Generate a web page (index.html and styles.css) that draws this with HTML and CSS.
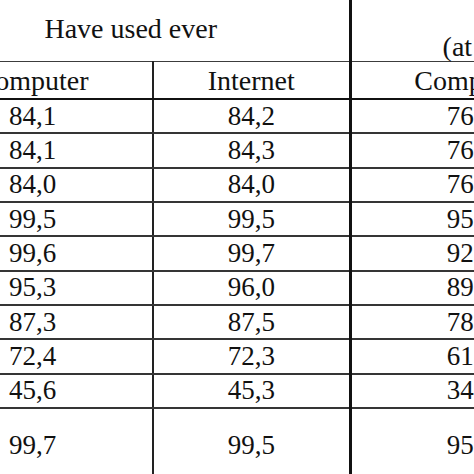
FILE: index.html
```html
<!DOCTYPE html>
<html>
<head>
<meta charset="utf-8">
<link rel="stylesheet" href="styles.css">
</head>
<body>
<div class="frame">
<table class="stats">
  <colgroup>
    <col class="c1"><col class="c2"><col class="c3"><col class="c4">
  </colgroup>
  <tr class="head1">
    <th colspan="2" class="grp grp-left">Have used ever</th>
    <th colspan="2" class="grp grp-right">Use regularly<br>(at least once every week)</th>
  </tr>
  <tr class="head2">
    <th class="k1">Computer</th><th class="k2">Internet</th><th class="k3">Computer</th><th class="k4">Internet</th>
  </tr>
  <tr class="row"><td class="k1">84,1</td><td class="k2">84,2</td><td class="k3">76,4</td><td class="k4">76,6</td></tr>
  <tr class="row"><td class="k1">84,1</td><td class="k2">84,3</td><td class="k3">76,5</td><td class="k4">76,7</td></tr>
  <tr class="row"><td class="k1">84,0</td><td class="k2">84,0</td><td class="k3">76,2</td><td class="k4">76,4</td></tr>
  <tr class="row"><td class="k1">99,5</td><td class="k2">99,5</td><td class="k3">95,1</td><td class="k4">95,4</td></tr>
  <tr class="row"><td class="k1">99,6</td><td class="k2">99,7</td><td class="k3">92,8</td><td class="k4">93,0</td></tr>
  <tr class="row"><td class="k1">95,3</td><td class="k2">96,0</td><td class="k3">89,7</td><td class="k4">90,1</td></tr>
  <tr class="row"><td class="k1">87,3</td><td class="k2">87,5</td><td class="k3">78,3</td><td class="k4">78,6</td></tr>
  <tr class="row"><td class="k1">72,4</td><td class="k2">72,3</td><td class="k3">61,2</td><td class="k4">61,0</td></tr>
  <tr class="row"><td class="k1">45,6</td><td class="k2">45,3</td><td class="k3">34,9</td><td class="k4">34,6</td></tr>
  <tr class="last"><td class="k1">99,7</td><td class="k2">99,5</td><td class="k3">95,6</td><td class="k4">95,8</td></tr>
</table>
</div>
</body>
</html>
```

FILE: styles.css
```css
html, body {
  margin: 0;
  padding: 0;
  background: #ffffff;
}

.frame {
  width: 474px;
  height: 474px;
  overflow: hidden;
  background: #ffffff;
}

.stats {
  border-collapse: collapse;
  table-layout: fixed;
  width: 913px;
  margin-left: -87px;
  margin-top: -5px;
  font-family: "Liberation Serif", "Times New Roman", serif;
  font-size: 27px;
  color: #111111;
}

.c1 { width: 240px; }
.c2 { width: 197px; }
.c3 { width: 240px; }
.c4 { width: 236px; }

.stats th,
.stats td {
  padding: 0;
  text-align: center;
  vertical-align: middle;
  font-weight: normal;
  white-space: nowrap;
}

.stats th { font-size: 28px; }

.head1 { height: 66px; }
.head1 th {
  line-height: 31px;
  border-bottom: 1.5px solid #3c3c3c;
}
.head1 .grp-left { padding-top: 2px; }
.head1 .grp-right {
  border-left: 3px solid #111111;
  line-height: 29px;
  vertical-align: bottom;
  padding-bottom: 0;
}

.head2 { height: 38px; }
.head2 th {
  border-bottom: 2.5px solid #111111;
  padding-top: 2px;
}

.row { height: 34.33px; }
.row td { border-bottom: 2px solid #353535; }

.last { height: 74px; }

.k1 { border-right: 2px solid #222222; }
.k2 { border-right: 3px solid #111111; }
.k3 { border-right: 2px solid #222222; }
```
